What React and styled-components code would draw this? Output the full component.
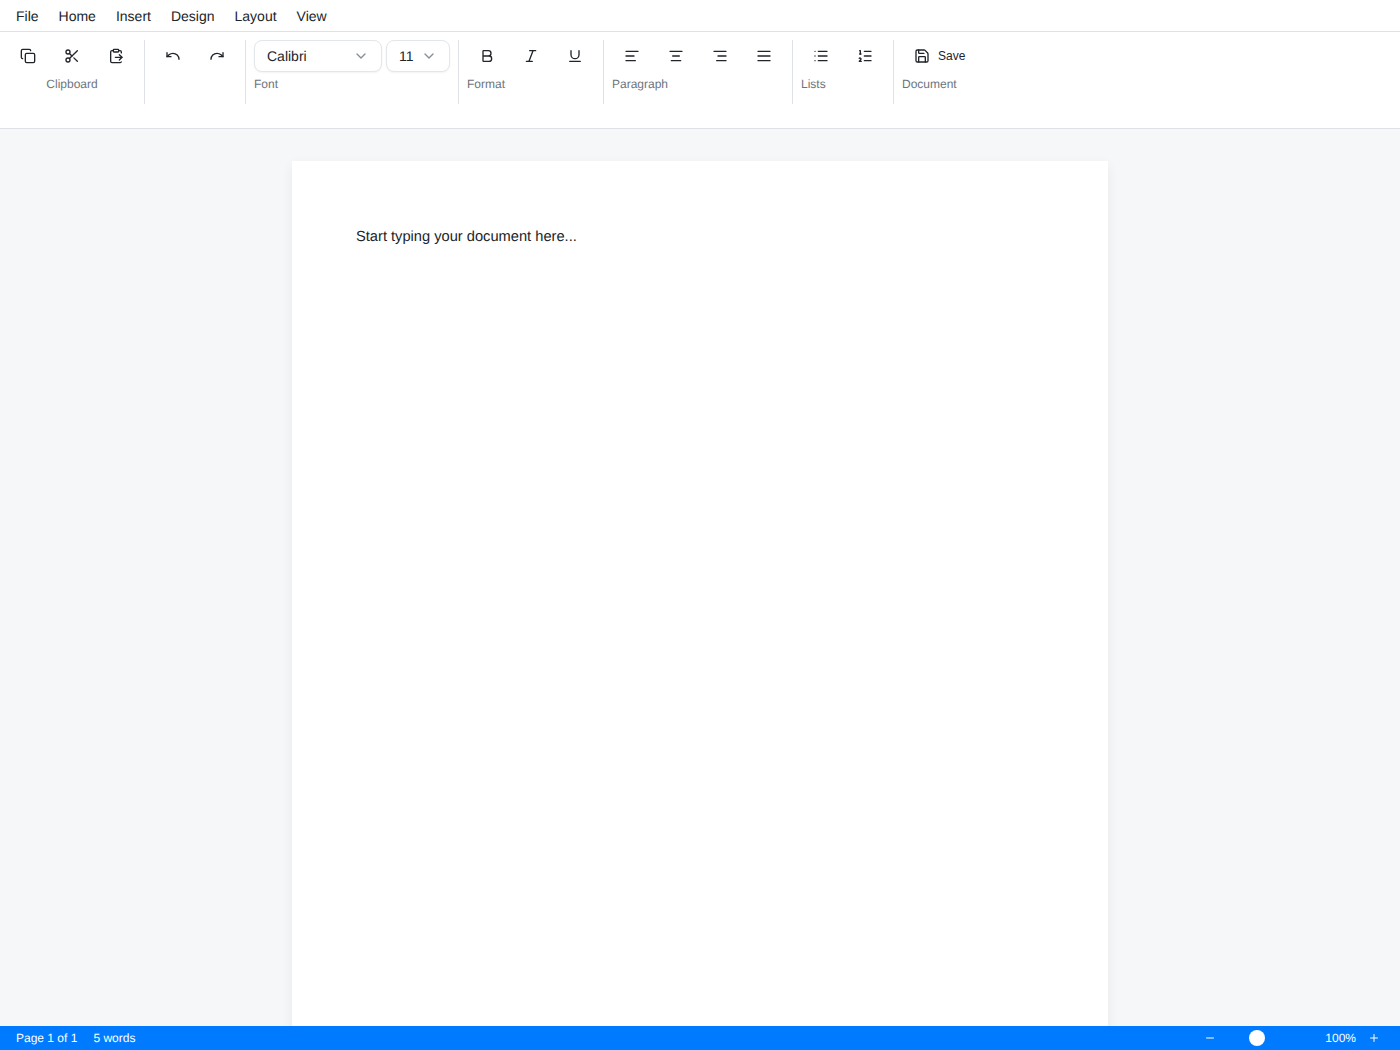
import React from "react";
import styled, { createGlobalStyle } from "styled-components";
import {
  Copy, Scissors, ClipboardPaste, Undo, Redo, ChevronDown, Bold, Italic, Underline,
  AlignLeft, AlignCenter, AlignRight, AlignJustify, List, ListOrdered, Save, Minus, Plus,
} from "lucide-react";

const GlobalStyle = createGlobalStyle`
  html, body, #root {
    margin: 0;
    height: 100%;
  }
  body {
    font-family: "Liberation Sans", Arial, sans-serif;
    color: #212529;
    overflow: hidden;
    text-rendering: geometricPrecision;
  }
`;

const Shell = styled.div`
  display: flex;
  flex-direction: column;
  height: 100vh;
  background: #f6f7f9;
`;

const MenuBar = styled.nav`
  display: flex;
  align-items: center;
  gap: 20px;
  height: 31px;
  padding: 0 16px;
  background: #fff;
  border-bottom: 1px solid #dee2e6;
  font-size: 14px;
  flex-shrink: 0;
`;

const MenuItem = styled.span`
  color: #212529;
`;

const Ribbon = styled.div`
  display: flex;
  align-items: flex-start;
  box-sizing: border-box;
  height: 97px;
  padding: 8px 0;
  background: #fff;
  border-bottom: 1px solid #dee2e6;
  flex-shrink: 0;
`;

const Group = styled.section`
  box-sizing: border-box;
  height: 64px;
  padding: 0 8px;
  border-right: ${(p) => (p.$last ? "none" : "1px solid #dee2e6")};
`;

const Controls = styled.div`
  display: flex;
  gap: 4px;
  height: 32px;
`;

const GroupLabel = styled.div`
  margin-top: 4px;
  height: 16px;
  line-height: 16px;
  font-size: 12px;
  color: #6c757d;
  text-align: ${(p) => (p.$center ? "center" : "left")};
`;

const IconButton = styled.button`
  display: flex;
  align-items: center;
  justify-content: center;
  gap: 8px;
  width: ${(p) => (p.$wide ? "auto" : "40px")};
  height: 32px;
  padding: ${(p) => (p.$wide ? "0 12px" : "0")};
  border: none;
  border-radius: 4px;
  background: transparent;
  color: #212529;
  font-family: inherit;
  font-size: 12px;
`;

const Select = styled.div`
  display: flex;
  align-items: center;
  justify-content: space-between;
  box-sizing: border-box;
  width: ${(p) => p.$width}px;
  height: 32px;
  padding: 0 12px;
  border: 1px solid #e3e6ea;
  border-radius: 8px;
  background: #fff;
  font-size: 14px;
  color: #212529;
  box-shadow: 0 1px 2px rgba(0, 0, 0, 0.05);

  svg {
    color: #868e96;
  }
`;

const Workspace = styled.main`
  flex: 1;
  min-height: 0;
  overflow: hidden;
  padding-top: 32px;
  display: flex;
  justify-content: center;
`;

const Page = styled.article`
  box-sizing: border-box;
  width: 816px;
  height: 1056px;
  padding: 64px;
  background: #fff;
  box-shadow: 0 4px 12px rgba(0, 0, 0, 0.06);
  font-size: 11pt;
  line-height: 24px;
  color: #212529;
`;

const StatusBar = styled.footer`
  display: flex;
  align-items: center;
  justify-content: space-between;
  height: 24px;
  padding: 0 16px;
  background: #007bff;
  color: #fff;
  font-size: 12px;
  flex-shrink: 0;
`;

const StatusInfo = styled.div`
  display: flex;
  gap: 16px;
`;

const ZoomControls = styled.div`
  display: flex;
  align-items: center;
  gap: 8px;
`;

const ZoomButton = styled.button`
  display: flex;
  align-items: center;
  justify-content: center;
  width: 20px;
  height: 20px;
  padding: 0;
  border: none;
  background: transparent;
  color: #fff;
`;

const ZoomSlider = styled.input`
  appearance: none;
  width: 80px;
  height: 16px;
  margin: 0;
  background: transparent;

  &::-webkit-slider-thumb {
    appearance: none;
    width: 16px;
    height: 16px;
    border-radius: 50%;
    background: #fff;
  }
`;

const ZoomValue = styled.span`
  width: 40px;
  text-align: right;
`;

const iconProps = { size: 16, strokeWidth: 2 };

function ToolGroup({ label, center, last, children }) {
  return (
    <Group $last={last}>
      <Controls>{children}</Controls>
      <GroupLabel $center={center}>{label}</GroupLabel>
    </Group>
  );
}

export default function App() {
  return (
    <Shell>
      <GlobalStyle />
      <MenuBar>
        {["File", "Home", "Insert", "Design", "Layout", "View"].map((m) => (
          <MenuItem key={m}>{m}</MenuItem>
        ))}
      </MenuBar>
      <Ribbon>
        <ToolGroup label="Clipboard" center>
          <IconButton><Copy {...iconProps} /></IconButton>
          <IconButton><Scissors {...iconProps} /></IconButton>
          <IconButton><ClipboardPaste {...iconProps} /></IconButton>
        </ToolGroup>
        <ToolGroup>
          <IconButton><Undo {...iconProps} /></IconButton>
          <IconButton><Redo {...iconProps} /></IconButton>
        </ToolGroup>
        <ToolGroup label="Font">
          <Select $width={128}>Calibri <ChevronDown size={16} /></Select>
          <Select $width={64}>11 <ChevronDown size={16} /></Select>
        </ToolGroup>
        <ToolGroup label="Format">
          <IconButton><Bold {...iconProps} /></IconButton>
          <IconButton><Italic {...iconProps} /></IconButton>
          <IconButton><Underline {...iconProps} /></IconButton>
        </ToolGroup>
        <ToolGroup label="Paragraph">
          <IconButton><AlignLeft {...iconProps} /></IconButton>
          <IconButton><AlignCenter {...iconProps} /></IconButton>
          <IconButton><AlignRight {...iconProps} /></IconButton>
          <IconButton><AlignJustify {...iconProps} /></IconButton>
        </ToolGroup>
        <ToolGroup label="Lists">
          <IconButton><List {...iconProps} /></IconButton>
          <IconButton><ListOrdered {...iconProps} /></IconButton>
        </ToolGroup>
        <ToolGroup label="Document" last>
          <IconButton $wide><Save {...iconProps} />Save</IconButton>
        </ToolGroup>
      </Ribbon>
      <Workspace>
        <Page>Start typing your document here...</Page>
      </Workspace>
      <StatusBar>
        <StatusInfo>
          <span>Page 1 of 1</span>
          <span>5 words</span>
        </StatusInfo>
        <ZoomControls>
          <ZoomButton><Minus size={12} /></ZoomButton>
          <ZoomSlider type="range" min="50" max="200" defaultValue="100" />
          <ZoomValue>100%</ZoomValue>
          <ZoomButton><Plus size={12} /></ZoomButton>
        </ZoomControls>
      </StatusBar>
    </Shell>
  );
}
